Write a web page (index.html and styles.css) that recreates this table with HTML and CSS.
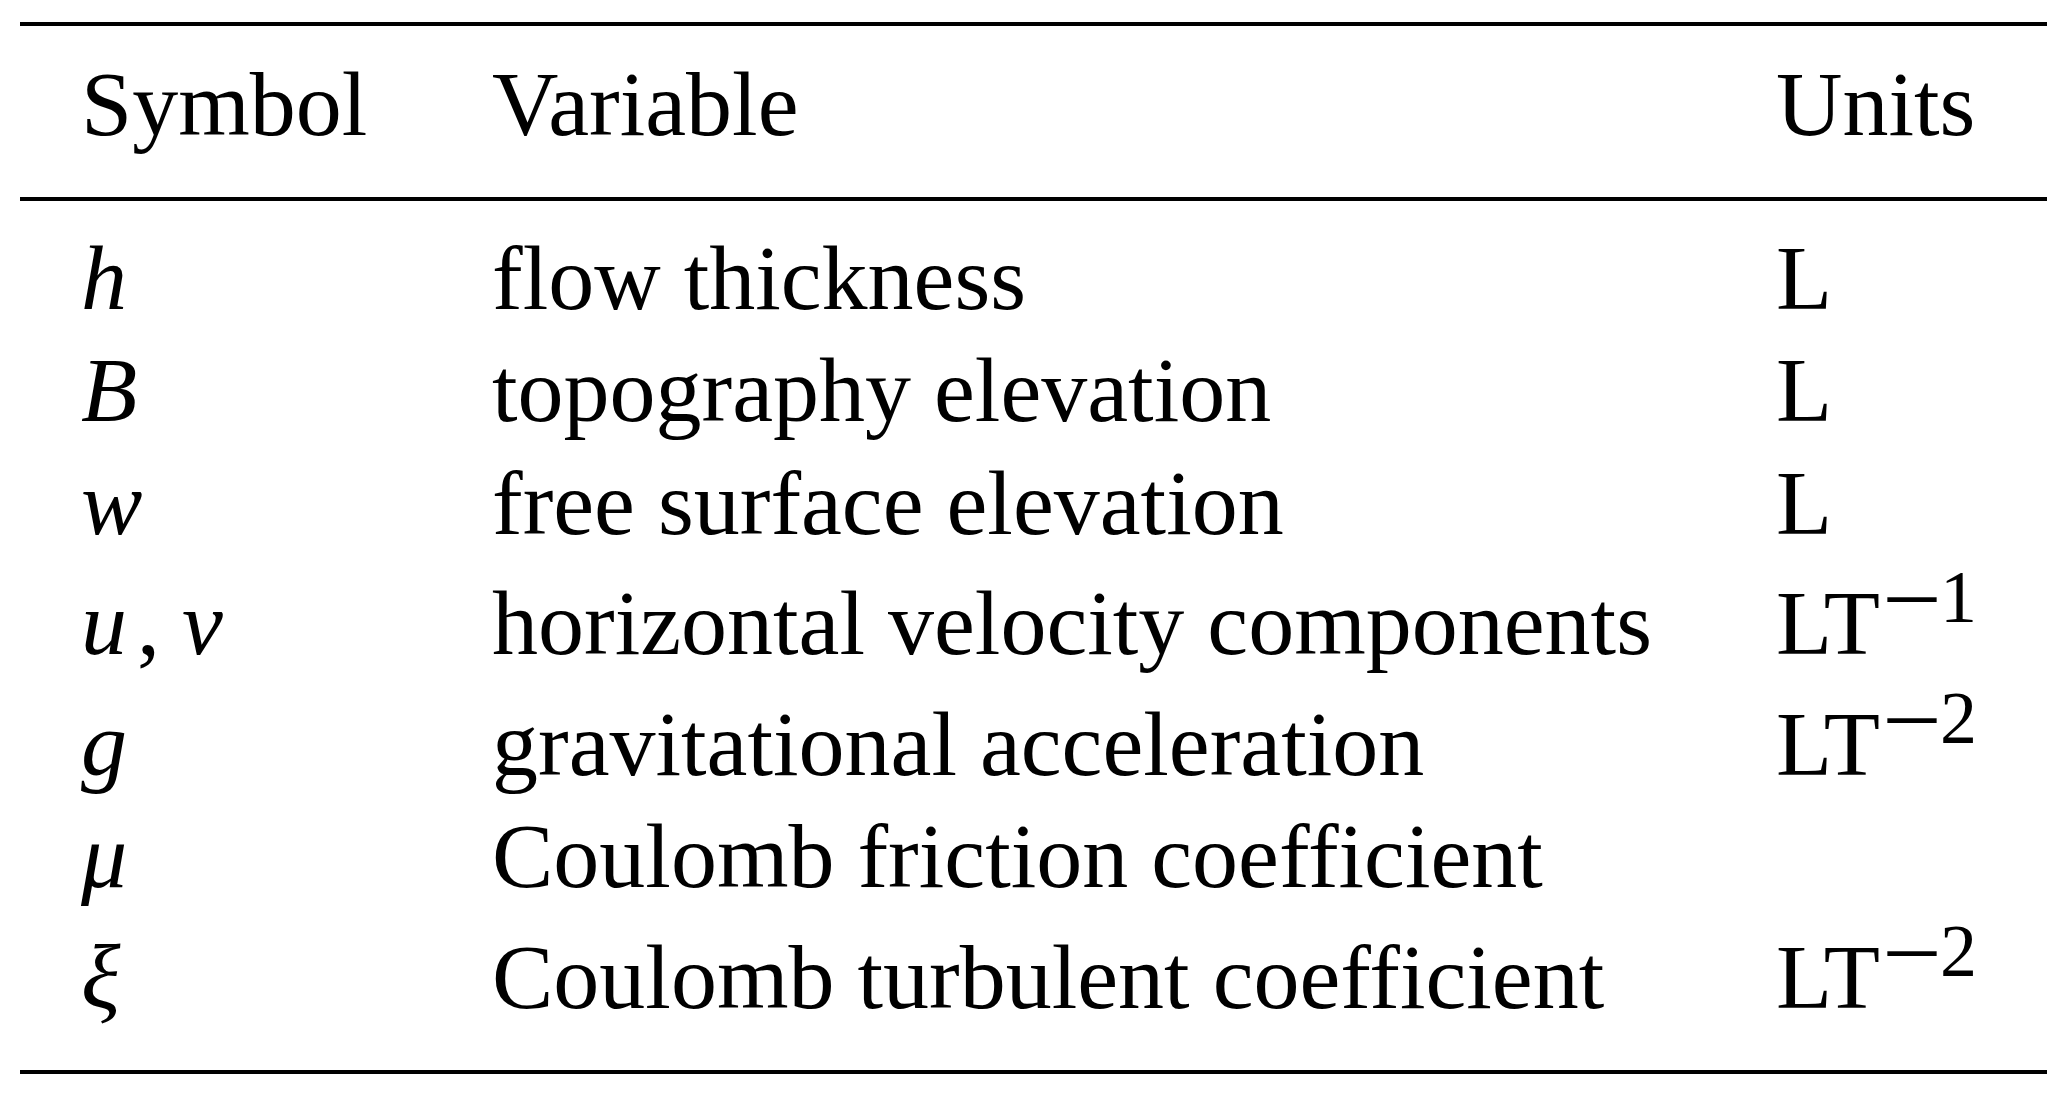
FILE: index.html
```html
<!DOCTYPE html>
<html lang="en">
<head>
<meta charset="utf-8">
<title>Variables</title>
<link rel="stylesheet" href="styles.css">
</head>
<body>
<div class="table">
  <div class="head">
    <div class="row">
      <div class="c1">Symbol</div>
      <div class="c2">Variable</div>
      <div class="c3">Units</div>
    </div>
  </div>
  <div class="body">
    <div class="row">
      <div class="c1"><i>h</i></div>
      <div class="c2">flow thickness</div>
      <div class="c3">L</div>
    </div>
    <div class="row">
      <div class="c1"><i>B</i></div>
      <div class="c2">topography elevation</div>
      <div class="c3">L</div>
    </div>
    <div class="row">
      <div class="c1"><i>w</i></div>
      <div class="c2">free surface elevation</div>
      <div class="c3">L</div>
    </div>
    <div class="row sup-row">
      <div class="c1"><i>u</i><span class="comma">,</span><i>v</i></div>
      <div class="c2">horizontal velocity components</div>
      <div class="c3">LT<sup><span class="minus">–</span>1</sup></div>
    </div>
    <div class="row sup-row">
      <div class="c1"><i>g</i></div>
      <div class="c2">gravitational acceleration</div>
      <div class="c3">LT<sup><span class="minus">–</span>2</sup></div>
    </div>
    <div class="row">
      <div class="c1"><i>μ</i></div>
      <div class="c2">Coulomb friction coefficient</div>
      <div class="c3"></div>
    </div>
    <div class="row sup-row">
      <div class="c1"><i>ξ</i></div>
      <div class="c2">Coulomb turbulent coefficient</div>
      <div class="c3">LT<sup><span class="minus">–</span>2</sup></div>
    </div>
  </div>
</div>
</body>
</html>
```

FILE: styles.css
```css
html, body {
  margin: 0;
  padding: 0;
  background: #ffffff;
}

body {
  font-family: "Liberation Serif", "Times New Roman", serif;
  font-size: 92px;
  color: #000000;
}

.table {
  margin: 22px 0 0 20px;
  width: 2027px;
  border-top: 4px solid #000;
  border-bottom: 4px solid #000;
}

.row {
  display: grid;
  grid-template-columns: 472px 1284px 1fr;
  line-height: 112.5px;
  white-space: nowrap;
}

.head {
  border-bottom: 4px solid #000;
  padding-bottom: 15px;
}

.head .row {
  line-height: 156px;
}

.body {
  padding-top: 20.75px;
  padding-bottom: 36.75px;
}

.sup-row {
  padding-top: 8px;
}

.c1 {
  padding-left: 61px;
}

i {
  font-style: italic;
}

.comma {
  margin-left: 10px;
  margin-right: 22px;
}

sup {
  font-size: 74px;
  line-height: 0;
  vertical-align: 32px;
  margin-left: 8px;
}

.minus {
  font-size: 96px;
  margin-right: 4px;
}
```
